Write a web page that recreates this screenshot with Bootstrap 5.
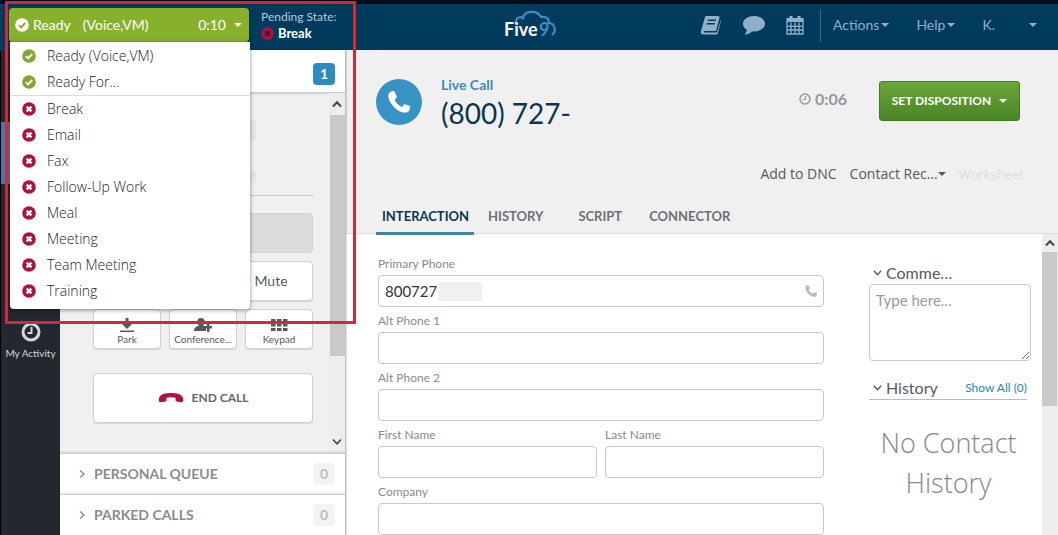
<!DOCTYPE html>
<html lang="en">
<head>
<meta charset="utf-8">
<meta name="viewport" content="width=device-width, initial-scale=1">
<title>Five9 Agent Desktop</title>
<link href="https://cdn.jsdelivr.net/npm/bootstrap@5.3.0/dist/css/bootstrap.min.css" rel="stylesheet">
<style>
body{font-family:Lato,"Liberation Sans",sans-serif;font-size:14px;line-height:20px;color:#55595e;background:#fff}
button,input,textarea{font-family:inherit}
button{border:0;background:none;padding:0;color:inherit}
svg{display:block;flex:none}
.shell{height:100vh;overflow:hidden}
.topbar{background:#003a5d;border-top:4px solid #050d1d;height:50px;color:#8fb0c6;padding:0 21px 4px 9px}
.caret{width:0;height:0;border:4px solid transparent;border-top-color:currentColor;border-bottom:0;flex:none}
.state-box{width:240px}
.state-btn{width:100%;height:34px;background:#87b12c;color:#fff;border-radius:4px;padding:0 7px 0 6px;font-size:14px}
.state-menu{--bs-dropdown-min-width:240px;--bs-dropdown-padding-y:0;top:34px;left:1px;width:240px;padding:1px 0 5px;border:0;border-radius:0 0 4px 4px;box-shadow:0 1px 4px rgba(0,0,0,.45)}
.state-menu .dropdown-item{height:26px;padding:0 12px;gap:11px;display:flex;align-items:center;color:#222;font:300 14px/26px "Open Sans",sans-serif}
.state-menu hr{margin:0;border-color:#ddd;opacity:1}
.pending{font-size:12px;line-height:17px;color:#b5cbd9}
.pending strong{font-size:13px;color:#fff}
.main-nav{gap:27px}
.main-nav button{gap:2px}
.brand{margin-left:167px}
.tools{gap:20px;margin-right:16px}
.vline{width:1px;height:33px;background:#3b6580;margin-right:12px}
.rail{width:60px;background:#23272f;border-left:1px solid #000;color:#d5d7da;font-size:10px;line-height:14px}
.rail-now{height:62px;width:100%;background:#4677ad}
.rail-link{margin-top:138px}
.panel{width:285px;background:#f0f0f0;box-shadow:1px 0 2px rgba(0,0,0,.35);z-index:1}
.panel-head{height:43px;background:#fff;border-bottom:1px solid #ccc;box-shadow:0 1px 2px rgba(0,0,0,.15);padding:5px 10px 0}
.count{width:22px;height:22px;border-radius:4px;font-size:14px;font-weight:700;display:flex;align-items:center;justify-content:center;background:#2c8bbf;color:#fff}
.count-off{background:#f3f3f3;color:#bbb}
.call-tools{padding:27px 16px 0 33px}
.redact{background:#e6e6e6;height:20px;width:163px}
.redact-low{margin:31px 0 12px;height:12px}
.call-tools hr{margin:0 0 17px}
.key{background:#fff;border:1px solid #d0d0d0;border-radius:4px;box-shadow:0 1px 1px rgba(0,0,0,.1);color:#55595e;flex:1 1 0}
.key-small{height:40px;font-size:10px;line-height:12px;padding-top:3px}
.key-mid{height:40px;font-size:14px}
.key-off{height:40px;background:#dbdcdc;border-radius:4px;border:1px solid #d3d3d3;margin-bottom:8px}
.mute{flex:0 0 84px}
.key-end{height:50px;font-size:12px;font-weight:700;color:#666;width:100%}
.sbar{width:16px;background:#ededed;flex:none}
.sbar .thumb{background:#c9c9c9;width:15px}
.sbar-end{height:18px;flex:none;display:flex;align-items:center;justify-content:center}
.panel .sbar-end{height:22px}
.queue{height:41px;background:#fff;border-top:1px solid #ccc;box-shadow:0 -1px 2px rgba(0,0,0,.12);padding:0 10px 0 18px;color:#8b8b8b;font-size:14px;font-weight:700;width:100%}
.call-head{height:184px;background:#f0f0f0;border-bottom:1px solid #ddd;margin-left:1px}
.call-top{padding:25px 38px 0 30px}
.call-icon{width:46px;height:46px;border-radius:50%;background:#3893c5;margin:4px 19px 0 0}
.caller{color:#0a3650;font-size:28px;line-height:36px}
.clock{height:48px;color:#94979b;font-size:16px;margin-right:32px}
.dispo{width:141px;height:40px;border:1px solid #3f7a24;border-radius:3px;background:linear-gradient(#6ba63a,#4b8427);color:#fff;font-size:12px;font-weight:700;margin-top:6px}
.links{font-family:"Open Sans",sans-serif;font-size:14px;gap:13px;padding-right:34px;margin-bottom:14px}
.links a{color:#55595e;text-decoration:none}
.links .off{color:#dcdcdc;font-size:13px}
.tab-strip{padding-left:30px;font-size:13px;font-weight:700;height:35px}
.tab-strip a{height:37px;padding:8px 5px 0 6px;color:#6d7175;text-decoration:none}
.tab-strip a.now{border-bottom:3px solid #3f83a3;color:#0a3650}
.fields{padding:20px 0 0 33px}
.fields label{display:block;font-size:12px;line-height:20px;height:20px;margin-bottom:1px;color:#858a90}
.fields .box{border:1px solid #c8c8c8;border-radius:4px;height:32px;width:100%;padding:0 6px;font-size:15px;color:#333;background:#fff;margin-bottom:4px}
.phone-box{position:relative}
.phone-box .mask{position:absolute;left:61px;top:7px;width:43px;height:19px;background:#f0f0f0}
.phone-box svg{position:absolute;right:6px;top:9px}
.notes{width:162px;margin:28px 11px 0 45px;font-size:16px;flex:none}
.notes h2{font-size:16px;font-weight:400;line-height:22px;margin:0}
.notes textarea{width:100%;height:77px;border:1px solid #c8c8c8;border-radius:4px;padding:3px 6px;font:400 15px/24px Lato,sans-serif;display:block}
.notes textarea::placeholder{color:#999}
.past{border-bottom:1px solid #bbb;margin:16px 4px 0 0;height:23px}
.past a{font-size:12px;color:#2a83b5;text-decoration:none}
.none{font:300 27px/40px "Open Sans",sans-serif;color:#85888c;margin:23px 3px 0 0;text-align:center}
.callout-frame{position:absolute;left:5px;top:1px;width:351px;height:323px;border:3px solid #cf2a35;z-index:2000;pointer-events:none}
</style>
</head>
<body>
<svg width="0" height="0" class="position-absolute" aria-hidden="true">
<symbol id="ok" viewBox="0 0 14 14"><circle cx="7" cy="7" r="6.800" fill="currentColor"/><path d="M3.800 7.100 6.200 9.400 10.200 5" fill="none" stroke="var(--mark,#fff)" stroke-width="2"/></symbol>
<symbol id="no" viewBox="0 0 14 14"><circle cx="7" cy="7" r="6.800" fill="currentColor"/><path d="M4.600 4.600 9.400 9.400M9.400 4.600 4.600 9.400" stroke="var(--mark,#fff)" stroke-width="2.400"/></symbol>
<symbol id="phone" viewBox="0 0 24 24"><path fill="currentColor" d="M6.600 1.600 3.300 2.900C1.300 5.200 1.900 9.700 5.200 14c3.600 4.800 8.200 7.700 12.100 7.800 1.800.1 3.600-.9 4.300-2.300l.7-2.900c.1-.5-.1-.8-.5-1l-4.300-1.500c-.4-.2-.8 0-1 .3l-1.600 2.100C12 15.700 9.500 13.100 7.900 9.900l1.900-1.800c.3-.3.3-.6.200-1L7.700 2.200c-.2-.5-.6-.8-1.100-.6z"/></symbol>
<symbol id="up" viewBox="0 0 10 8"><path d="M1 6.500 5 2.200l4 4.300" fill="none" stroke="#444" stroke-width="2"/></symbol>
<symbol id="down" viewBox="0 0 10 8"><path d="M1 1.500 5 5.800l4-4.300" fill="none" stroke="currentColor" stroke-width="1.600"/></symbol>
</svg>
<div class="shell d-flex flex-column position-relative">
<header class="topbar d-flex align-items-center flex-shrink-0">
  <div class="state-box dropdown">
    <button class="state-btn d-flex align-items-center" type="button" aria-expanded="true" style="--mark:#87b12c">
      <svg width="14" height="14"><use href="#ok"/></svg><span class="ms-1">Ready</span><span class="ms-2 ps-1">(Voice,VM)</span><span class="ms-auto me-2">0:10</span><span class="caret"></span>
    </button>
    <ul class="dropdown-menu show state-menu" id="stateMenu"></ul>
  </div>
  <div class="pending ms-2 ps-1"><div>Pending State:</div><div class="d-flex align-items-center gap-1"><svg width="13" height="13" color="#b0103f" style="--mark:#4b1238"><use href="#no"/></svg><strong>Break</strong></div></div>
  <a href="#" class="brand" aria-label="Five9"><svg width="52" height="30" viewBox="0 0 52 30"><path d="M12 13c-1-5 4-7 7-5 1-7 14-9 18-1 6-1 9 3 7 6 7 0 9 8 4 12" fill="none" stroke="#3e8fbd" stroke-width="2.200"/><text x="0" y="26" font-family="Lato" font-weight="700" font-size="18" fill="#fff">Five</text><text x="35" y="26" font-family="Lato" font-weight="700" font-size="18" fill="#3e8fbd">9</text></svg></a>
  <div class="tools d-flex align-items-center ms-auto">
    <svg width="22" height="20" viewBox="0 0 22 20"><path fill="#8fb0c6" fill-rule="evenodd" d="M6 1h12q2 0 1.500 2L16 16H4.500q-1.500 0-.5 1.500H17L21 4v1.500L18 18q-.4 1.500-2 1.500H3Q0 19 1 16L5 2q.3-1 1-1zM8 4.500 7.700 6h8l.3-1.500zM7 8l-.3 1.500h8L15 8z"/></svg>
    <svg width="24" height="20" viewBox="0 0 24 20"><path fill="#8fb0c6" d="M12 1c6 0 11 3.300 11 7.700S18 16.500 12 16.500l-2-.1C8 18.500 5.500 19.300 2.500 19.500c1.300-1.400 2.200-2.700 2.300-4.700C2.300 13.300 1 11.200 1 8.700 1 4.300 6 1 12 1z"/></svg>
    <svg width="18" height="20" viewBox="0 0 18 20"><path fill="none" stroke="#8fb0c6" stroke-width="1.300" d="M1 4h16v15H1zM1 11.300h16M1 15h16M5 7.500V19M9 7.500V19M13 7.500V19"/><path fill="#8fb0c6" d="M1 3h16v4H1zM3.500 1h3v5h-3zM11.500 1h3v5h-3z"/></svg>
  </div>
  <span class="vline"></span>
  <nav class="main-nav d-flex align-items-center">
    <button class="d-flex align-items-center">Actions<span class="caret"></span></button>
    <button class="d-flex align-items-center">Help<span class="caret"></span></button>
    <button class="d-flex align-items-center"><span class="me-4 pe-2">K.</span><span class="caret"></span></button>
  </nav>
</header>
<div class="d-flex flex-grow-1" style="min-height:0">
  <aside class="rail flex-shrink-0 pt-5">
    <div class="mt-4 rail-now"></div>
    <a href="#" class="rail-link d-block text-reset text-decoration-none text-center"><svg class="mx-auto mb-1" width="20" height="20" viewBox="0 0 20 20"><circle cx="10" cy="10" r="8" fill="none" stroke="#d5d7da" stroke-width="3"/><path d="M10.500 5v6H6.500" fill="none" stroke="#d5d7da" stroke-width="2"/></svg>My Activity</a>
  </aside>
  <section class="panel d-flex flex-column flex-shrink-0">
    <div class="panel-head d-flex align-items-center justify-content-end flex-shrink-0"><span class="count">1</span></div>
    <div class="d-flex flex-grow-1" style="min-height:0">
      <div class="call-tools flex-grow-1 overflow-hidden">
        <div class="redact"></div>
        <div class="redact redact-low"></div>
        <hr>
        <div class="key-off"></div>
        <div class="d-flex gap-2 mb-2"><button class="key key-mid">Hold</button><button class="key key-mid mute">Mute</button></div>
        <div class="d-flex gap-2">
          <button class="key key-small"><svg class="mx-auto" width="16" height="16" viewBox="0 0 16 16"><path fill="#55595e" d="M6.500 1h3v6H13l-5 5-5-5h3.500zM1 13.500h14V15H1z"/></svg>Park</button>
          <button class="key key-small"><svg class="mx-auto" width="20" height="16" viewBox="0 0 20 16"><path fill="#55595e" d="M8 1c5 0 4.500 6 2 7.500l3 1.500v4H1q-.5-4 5-5.500C3.500 7 3 1 8 1zM14 6h2.500v3H19v2.500h-2.500V15H14v-3.500h-2.500V9H14z"/></svg>Conference...</button>
          <button class="key key-small"><svg class="mx-auto" width="18" height="16" viewBox="0 0 18 16"><path fill="#55595e" d="M1 2h4.500v3H1zM7 2h4.500v3H7zM13 2h4.500v3H13zM1 6.500h4.500v3H1zM7 6.500h4.500v3H7zM13 6.500h4.500v3H13zM1 11h4.500v3H1zM7 11h4.500v3H7zM13 11h4.500v3H13z"/></svg>Keypad</button>
        </div>
        <button class="key key-end d-flex align-items-center justify-content-center gap-2 mt-4"><svg width="26" height="12" viewBox="0 0 26 12"><path fill="#b3123f" d="M1 9C-.5 2 8 1 13 1s13.500 1 12 8q-.3 1.500-1.500 1.300L18.500 9.500q-1-.3-1-1.500V5.700q-4.500-1-9 0V8q0 1.200-1 1.500l-5 .8Q1.300 10.500 1 9z"/></svg>END CALL</button>
      </div>
      <div class="sbar d-flex flex-column"><div class="sbar-end"><svg width="10" height="8"><use href="#up"/></svg></div><div class="thumb mx-auto" style="height:67%"></div><div class="sbar-end mt-auto"><svg width="10" height="8" color="#444"><use href="#down"/></svg></div></div>
    </div>
    <button class="queue d-flex align-items-center flex-shrink-0"><svg width="8" height="10" viewBox="0 0 8 10" class="me-2"><path d="M2 1.500 6 5 2 8.500" fill="none" stroke="#888" stroke-width="1.300"/></svg>PERSONAL QUEUE<span class="count count-off ms-auto">0</span></button>
    <button class="queue d-flex align-items-center flex-shrink-0"><svg width="8" height="10" viewBox="0 0 8 10" class="me-2"><path d="M2 1.500 6 5 2 8.500" fill="none" stroke="#888" stroke-width="1.300"/></svg>PARKED CALLS<span class="count count-off ms-auto">0</span></button>
  </section>
  <main class="flex-grow-1 d-flex flex-column" style="min-width:0">
    <div class="call-head d-flex flex-column flex-shrink-0">
      <div class="call-top d-flex align-items-start">
        <span class="call-icon d-flex align-items-center justify-content-center text-white"><svg width="26" height="26"><use href="#phone"/></svg></span>
        <div><div style="color:#3a8db5" class="fw-bold">Live Call</div><div class="caller">(800) 727-</div></div>
        <div class="clock ms-auto d-flex align-items-center gap-1 fw-bold"><svg width="12" height="12" viewBox="0 0 12 12"><circle cx="6" cy="6" r="5" fill="none" stroke="#94979b" stroke-width="1.500"/><path d="M6.500 3v3.500H3.800" fill="none" stroke="#94979b" stroke-width="1.200"/></svg>0:06</div>
        <button class="dispo d-flex align-items-center justify-content-center gap-2">SET DISPOSITION<span class="caret"></span></button>
      </div>
      <div class="links d-flex justify-content-end mt-auto"><a href="#">Add to DNC</a><a href="#" class="d-flex align-items-center">Contact Rec…<span class="caret"></span></a><a href="#" class="off">Worksheet</a></div>
      <nav class="tab-strip d-flex"><a href="#" class="now">INTERACTION</a><a href="#" class="ms-2">HISTORY</a><a href="#" class="ms-4">SCRIPT</a><a href="#" class="ms-3">CONNECTOR</a></nav>
    </div>
    <div class="d-flex flex-grow-1" style="min-height:0">
      <form class="fields flex-grow-1">
        <label for="p1">Primary Phone</label><div class="phone-box"><input class="box" id="p1" value="800727"><span class="mask"></span><svg width="14" height="14" color="#bcbcbc"><use href="#phone"/></svg></div>
        <label for="p2">Alt Phone 1</label><input class="box" id="p2">
        <label for="p3">Alt Phone 2</label><input class="box" id="p3">
        <div class="d-flex gap-2"><div class="flex-fill"><label for="fn">First Name</label><input class="box" id="fn"></div><div class="flex-fill"><label for="ln">Last Name</label><input class="box" id="ln"></div></div>
        <label for="co">Company</label><input class="box" id="co">
      </form>
      <aside class="notes">
        <h2 class="d-flex align-items-center gap-1 ps-1"><svg width="9" height="8" viewBox="0 0 10 8"><use href="#down"/></svg><label for="cm">Comme…</label></h2>
        <textarea id="cm" placeholder="Type here..."></textarea>
        <div class="past d-flex align-items-center ps-1"><h2 class="d-flex align-items-center gap-1"><svg width="9" height="8" viewBox="0 0 10 8"><use href="#down"/></svg>History</h2><a href="#" class="ms-auto">Show All (0)</a></div>
        <p class="none">No Contact History</p>
      </aside>
      <div class="sbar d-flex flex-column"><div class="sbar-end"><svg width="10" height="8"><use href="#up"/></svg></div><div class="thumb" style="height:51%"></div></div>
    </div>
  </main>
</div>
<div class="callout-frame"></div>
</div>
<script src="https://cdn.jsdelivr.net/npm/bootstrap@5.3.0/dist/js/bootstrap.bundle.min.js"></script>
<script>
const states=['Ready (Voice,VM)','Ready For...','Break','Email','Fax','Follow-Up Work','Meal','Meeting','Team Meeting','Training'];
stateMenu.innerHTML=states.map((s,i)=>`${i==2?'<li><hr class="dropdown-divider"></li>':''}<li><a class="dropdown-item" href="#"><svg width="14" height="14" color="${i<2?'#7fa82f':'#b0103f'}"><use href="#${i<2?'ok':'no'}"/></svg>${s}</a></li>`).join('');
</script>
</body>
</html>
